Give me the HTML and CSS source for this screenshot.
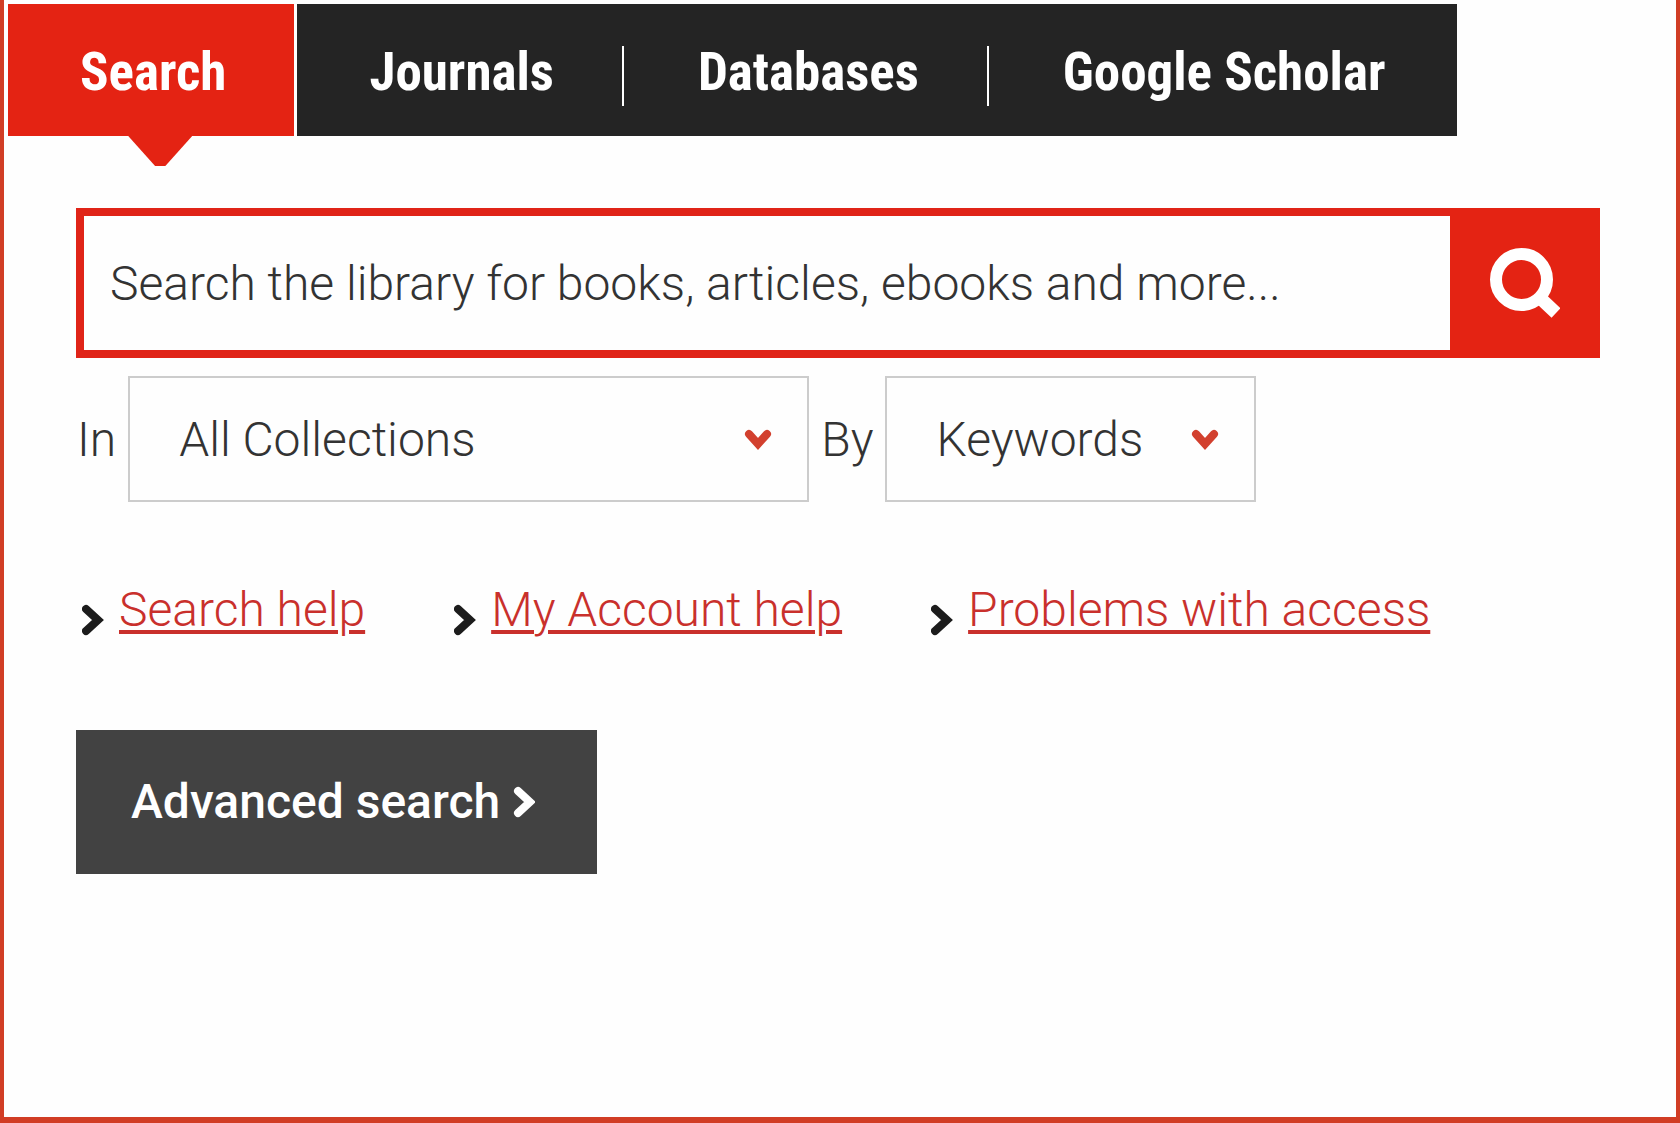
FILE: index.html
```
<!DOCTYPE html>
<html lang="en">
<head>
    <meta charset="UTF-8">
    <meta name="viewport" content="width=device-width, initial-scale=1.0">
    <title>Library Search</title>
    <link rel="stylesheet" href="styles.css">
</head>
<body>

<!-- Tabs -->
<nav class="tabs">
    <a class="tab active" href="#search">Search</a>
    <a class="tab" href="#journals">Journals</a>
    <a class="tab" href="#databases">Databases</a>
    <a class="tab" href="#scholar">Google Scholar</a>
</nav>

<main class="panel" id="search">
    <form>
        <div class="search-box">
            <input type="text" class="search-input" aria-label="Search the library" placeholder="Search the library for books, articles, ebooks and more...">
            <button type="submit" class="search-button" aria-label="Search">
                <svg width="70" height="70" viewBox="0 0 70 70">
                    <circle cx="31.5" cy="31.5" r="25.5" fill="none" stroke="#fff" stroke-width="12"/>
                    <path d="M48 48l18 17" stroke="#fff" stroke-width="13"/>
                </svg>
            </button>
        </div>

        <div class="filters">
            <label for="collection">In</label>
            <div class="select-wrap collection">
                <select id="collection">
                    <option>All Collections</option>
                </select>
                <svg class="arrow" width="28" height="22" viewBox="0 0 28 22"><path d="M5 5l9 10 9-10" fill="none" stroke="#d2402e" stroke-width="8" stroke-linecap="round"/></svg>
            </div>
            <label for="field">By</label>
            <div class="select-wrap field">
                <select id="field">
                    <option>Keywords</option>
                </select>
                <svg class="arrow" width="28" height="22" viewBox="0 0 28 22"><path d="M5 5l9 10 9-10" fill="none" stroke="#d2402e" stroke-width="8" stroke-linecap="round"/></svg>
            </div>
        </div>
    </form>

    <!-- Help links -->
    <ul class="links">
        <li>
            <svg width="22" height="32" viewBox="0 0 22 32"><path d="M4 5l12 11L4 27" fill="none" stroke="#1c1c1c" stroke-width="8" stroke-linecap="round"/></svg>
            <a href="#">Search help</a>
        </li>
        <li>
            <svg width="22" height="32" viewBox="0 0 22 32"><path d="M4 5l12 11L4 27" fill="none" stroke="#1c1c1c" stroke-width="8" stroke-linecap="round"/></svg>
            <a href="#">My Account help</a>
        </li>
        <li>
            <svg width="22" height="32" viewBox="0 0 22 32"><path d="M4 5l12 11L4 27" fill="none" stroke="#1c1c1c" stroke-width="8" stroke-linecap="round"/></svg>
            <a href="#">Problems with access</a>
        </li>
    </ul>

    <a class="advanced" href="#">
        Advanced search
        <svg width="22" height="32" viewBox="0 0 22 32"><path d="M5 5l12 11L5 27" fill="none" stroke="#fff" stroke-width="8" stroke-linecap="round"/></svg>
    </a>
</main>

</body>
</html>
```
FILE: styles.css
```
* {
    margin: 0;
    padding: 0;
    box-sizing: border-box;
}
body {
    min-height: 100vh;
    padding: 4px 4px 0;
    border: solid #d13d25;
    border-width: 0 4px 6px;
    background-color: #fefefe;
    color: #333;
    font-family: Roboto, "Liberation Sans", sans-serif;
    font-size: 48px;
    font-weight: 300;
    line-height: 56px;
}

/* Tabs */
.tabs {
    display: flex;
}
.tab {
    position: relative;
    padding: 40px 68px 36px 72px;
    background-color: #242424;
    color: #fff;
    font-family: "Roboto Condensed", Roboto, sans-serif;
    font-size: 53px;
    font-weight: 700;
    text-decoration: none;
    white-space: nowrap;
}
.tab.active {
    margin-right: 3px;
    background-color: #e42313;
}
.tab.active::after {
    content: '';
    position: absolute;
    top: 100%;
    left: 50%;
    width: 64px;
    height: 30px;
    margin-left: -23px;
    background-color: #e42313;
    clip-path: polygon(0 0, 100% 0, 58% 100%, 42% 100%);
}
.tab + .tab + .tab {
    padding-left: 76px;
}
.tab + .tab + .tab::before {
    content: '';
    position: absolute;
    top: 42px;
    left: 0;
    width: 2px;
    height: 60px;
    background-color: #fff;
}
.tab:last-child {
    padding-right: 72px;
}

/* Search form */
.panel {
    padding: 72px 72px 80px 68px;
}
.search-box {
    display: flex;
    height: 150px;
    border: 8px solid #e02418;
    border-right: none;
}
.search-input {
    flex: 1;
    min-width: 0;
    padding: 2px 26px 0;
    border: none;
    background-color: #fefefe;
    color: #333;
    font: inherit;
}
.search-input::placeholder {
    color: #333;
    opacity: 1;
}
.search-button {
    display: flex;
    align-items: center;
    justify-content: center;
    width: 150px;
    margin: -8px 0;
    border: none;
    background-color: #e42313;
    cursor: pointer;
}

/* Dropdowns */
.filters {
    display: flex;
    align-items: center;
    gap: 12px;
    margin-top: 18px;
    padding-left: 1px;
}
.filters label {
    padding-top: 2px;
}
.select-wrap {
    position: relative;
}
.select-wrap select {
    width: 100%;
    height: 126px;
    padding: 2px 0 0 49px;
    border: 2px solid #ccc;
    border-radius: 0;
    background-color: #fefefe;
    color: #333;
    font: inherit;
    appearance: none;
}
.collection {
    width: 681px;
}
.field {
    width: 371px;
}
.arrow {
    position: absolute;
    right: 37px;
    top: 53px;
    pointer-events: none;
}

/* Help links */
.links {
    display: flex;
    flex-wrap: wrap;
    gap: 89px;
    margin-top: 80px;
    padding-left: 6px;
    list-style: none;
}
.links li {
    display: flex;
    align-items: flex-end;
    gap: 15px;
}
.links svg {
    margin-bottom: 2px;
}
.links a {
    color: #c9302c;
    text-decoration-thickness: 4px;
    text-underline-offset: 4px;
}

/* Advanced search button */
.advanced {
    display: inline-flex;
    align-items: center;
    gap: 13px;
    margin-top: 92px;
    padding: 44px 62px 44px 55px;
    background-color: #424242;
    color: #fff;
    font-weight: 500;
    text-decoration: none;
}
```
